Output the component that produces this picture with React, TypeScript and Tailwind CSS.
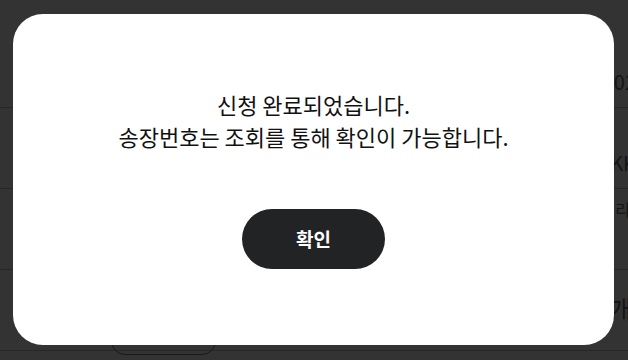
import React from 'react'

const font = { fontFamily: '"Noto Sans CJK KR", "Noto Sans", sans-serif' }

function BackgroundPage() {
  return (
    <div className="flex flex-col w-full h-full">
      <div className="h-[108px] border-b border-[#272727] flex items-end justify-end pb-[10px]">
        <span className="text-[20px] text-[#151515] mr-[-8px]">02</span>
      </div>
      <div className="h-[81px] border-b border-[#272727] flex items-end justify-end pb-[10px]">
        <span className="text-[20px] text-[#151515] mr-[-8px]">KK</span>
      </div>
      <div className="h-[81px] border-b border-[#272727] flex items-start justify-end pt-[8px]">
        <span className="text-[16px] text-[#151515] mr-[-2px]">리</span>
      </div>
      <div className="h-[81px] border-b border-[#272727] flex items-center justify-between">
        <div className="ml-[111px] mt-[60px] w-[105px] h-[30px] rounded-[14px] border border-[#1a1a1a]" />
        <span className="text-[24px] text-[#151515] mr-[-4px] mt-[-4px]">개</span>
      </div>
    </div>
  )
}

export default function App() {
  return (
    <div className="relative w-[628px] h-[360px] overflow-hidden bg-[#333333]" style={font}>
      <BackgroundPage />
      <div className="absolute left-[13px] top-[14px] w-[601px] h-[331px] rounded-[30px] bg-white flex flex-col items-center">
        <div className="mt-[74px] text-center text-[22px] leading-[32px] text-[#111111]">
          <p>신청 완료되었습니다.</p>
          <p>송장번호는 조회를 통해 확인이 가능합니다.</p>
        </div>
        <button className="mt-[57px] w-[143px] h-[60px] rounded-full bg-[#212325] text-white text-[19px] font-bold">
          확인
        </button>
      </div>
    </div>
  )
}
